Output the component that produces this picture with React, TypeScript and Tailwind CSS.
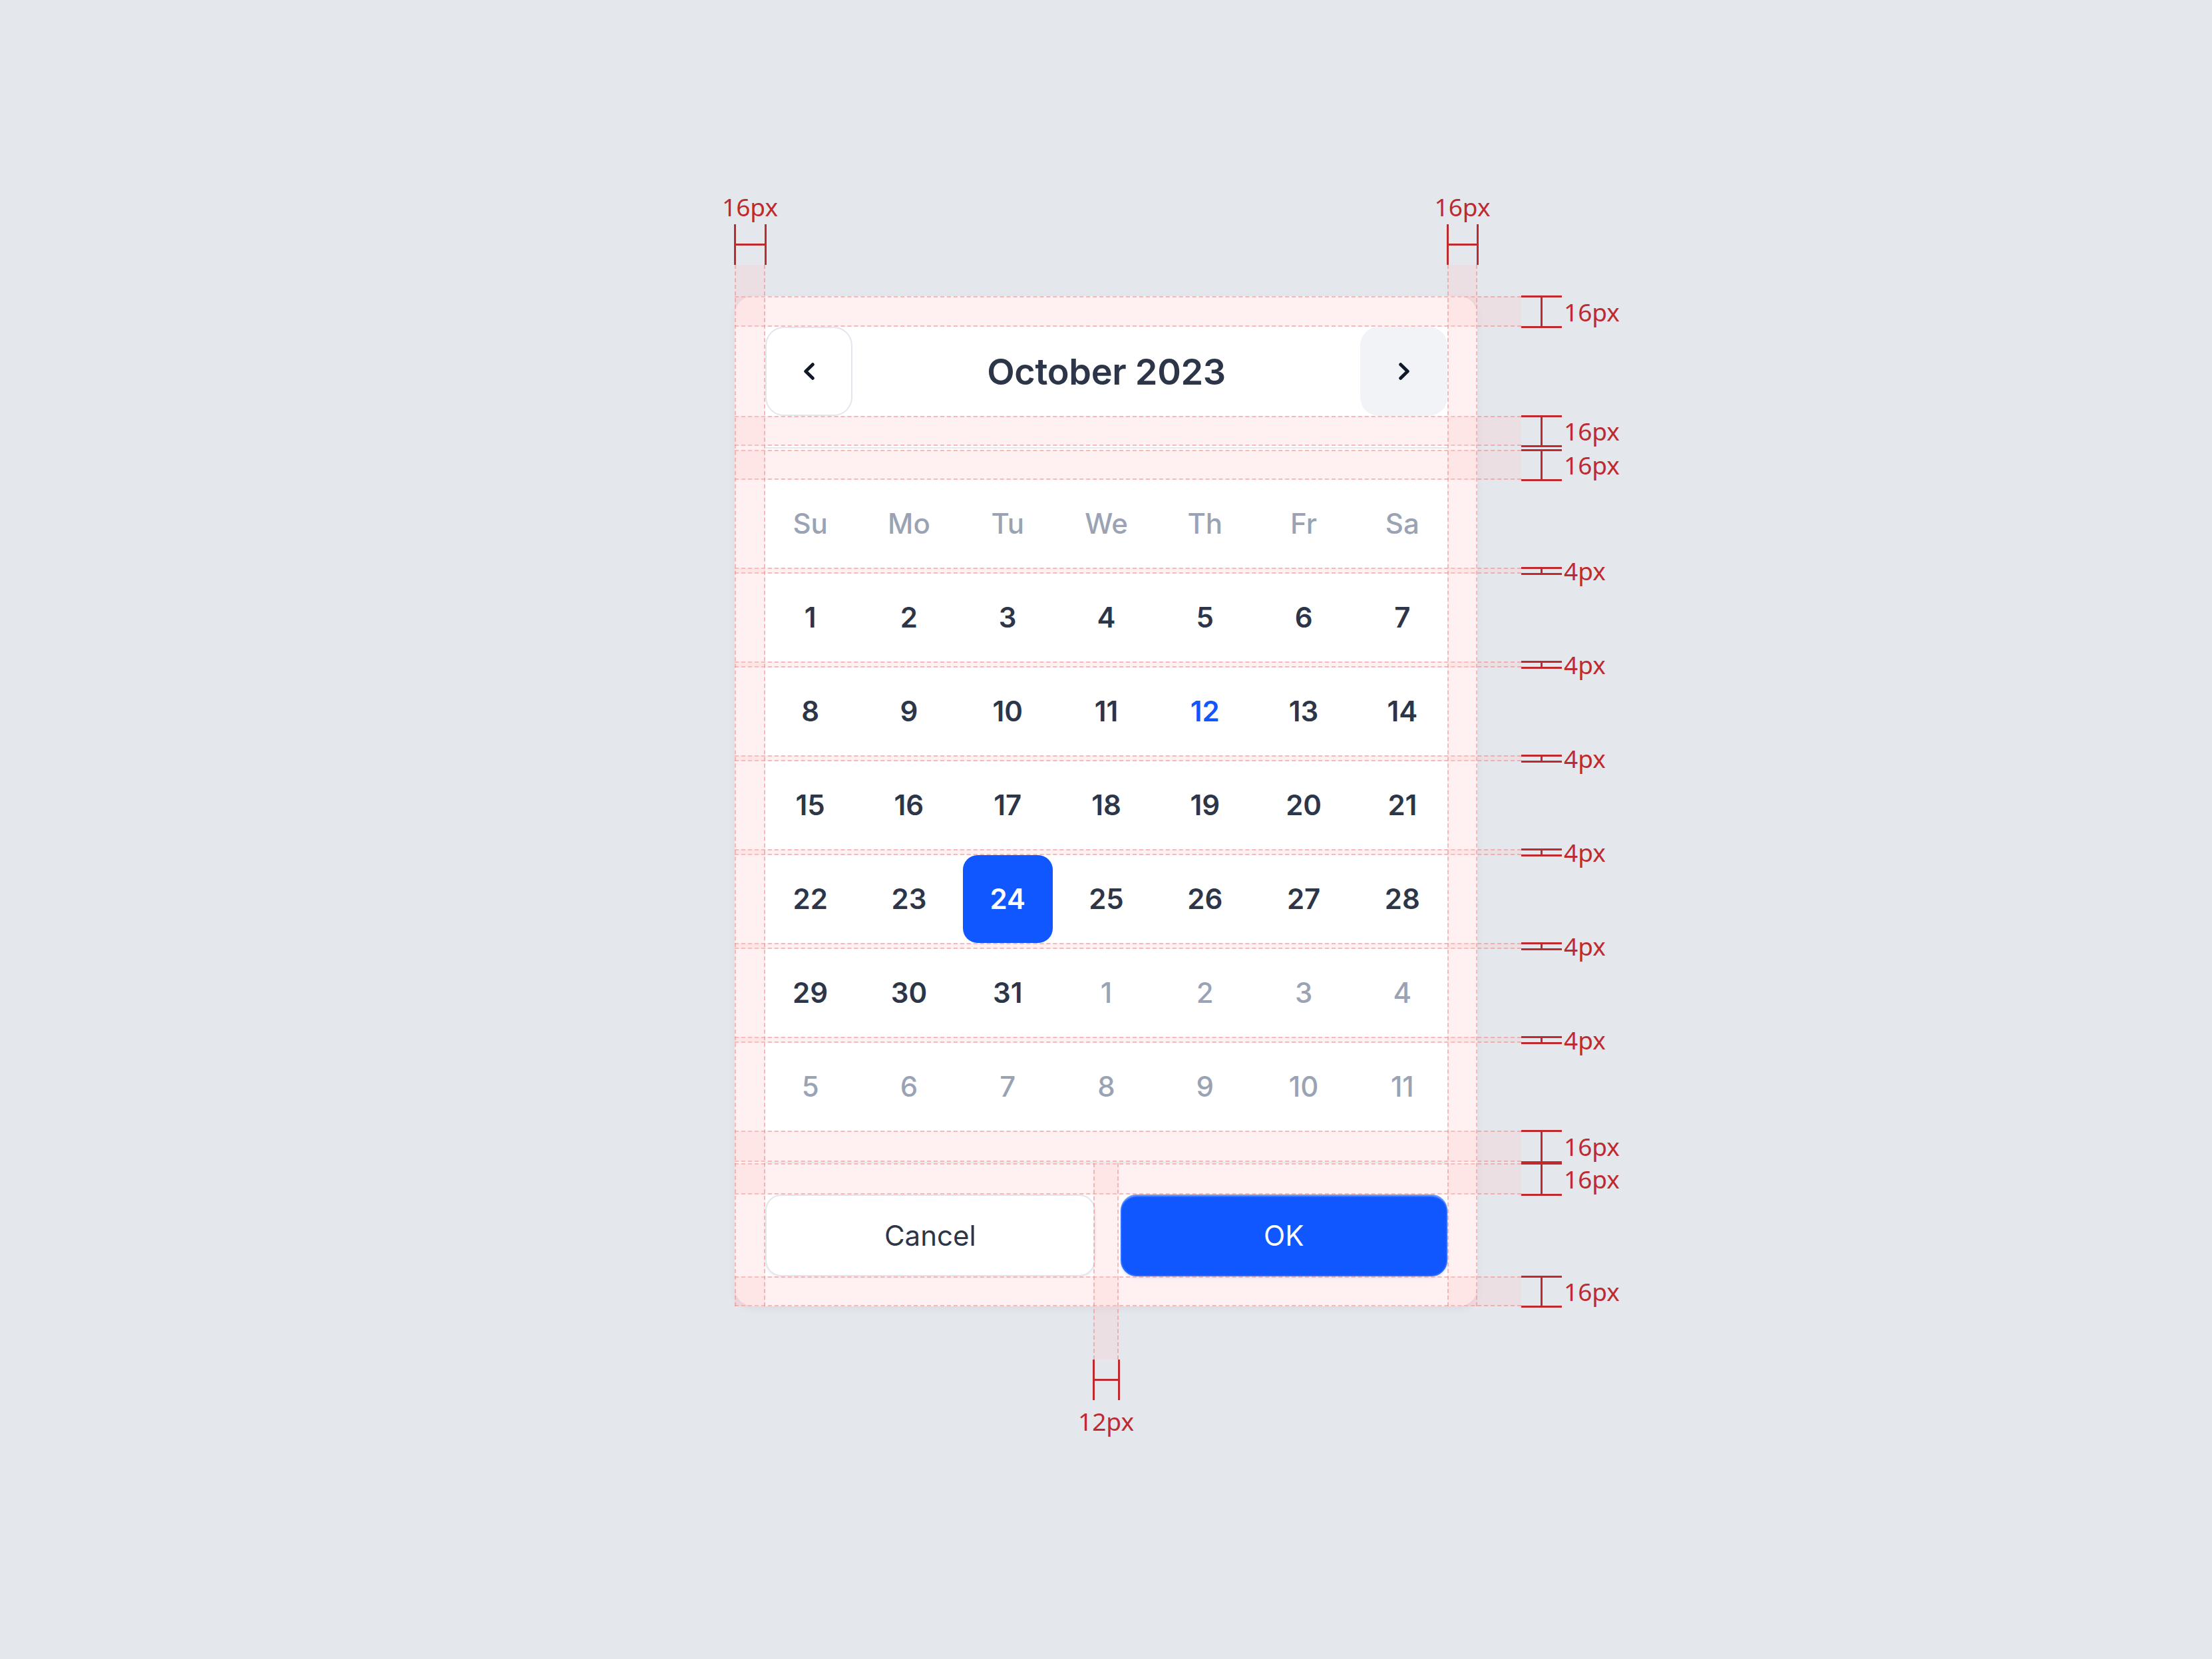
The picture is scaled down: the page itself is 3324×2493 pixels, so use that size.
import type { ReactNode } from "react";

type Day = { n: number; muted?: boolean };

const weekdays = ["Su", "Mo", "Tu", "We", "Th", "Fr", "Sa"];

const weeks: Day[][] = [
  [1, 2, 3, 4, 5, 6, 7].map((n) => ({ n })),
  [8, 9, 10, 11, 12, 13, 14].map((n) => ({ n })),
  [15, 16, 17, 18, 19, 20, 21].map((n) => ({ n })),
  [22, 23, 24, 25, 26, 27, 28].map((n) => ({ n })),
  [{ n: 29 }, { n: 30 }, { n: 31 }, { n: 1, muted: true }, { n: 2, muted: true }, { n: 3, muted: true }, { n: 4, muted: true }],
  [5, 6, 7, 8, 9, 10, 11].map((n) => ({ n, muted: true })),
];

const TODAY = 12;
const SELECTED = 24;

// layout numbers shared by the spec overlay
const CARD_W = 1116;
const CARD_H = 1518;
const GRID_TOP = 276;
const ROW_H = 132;
const ROW_GAP = 9;
const GUIDE_RIGHT = 1182;

function Chevron({ flip }: { flip?: boolean }) {
  return (
    <svg width="16" height="26" viewBox="0 0 16 26" className={flip ? "rotate-180" : ""}>
      <polyline
        points="13.25,2.75 2.75,13 13.25,23.25"
        fill="none"
        stroke="#111827"
        strokeWidth="5"
        strokeLinecap="round"
        strokeLinejoin="round"
      />
    </svg>
  );
}

function Cell({ children }: { children: ReactNode }) {
  return <div className="flex h-[132px] items-center justify-center">{children}</div>;
}

function DayCell({ d }: { d: Day }) {
  if (!d.muted && d.n === SELECTED) {
    return (
      <Cell>
        <div className="flex h-full w-full items-center justify-center rounded-[22px] bg-[#1157ff] font-semibold text-white">
          {d.n}
        </div>
      </Cell>
    );
  }
  const color = d.muted ? "font-medium text-[#9aa3b4]" : d.n === TODAY ? "font-semibold text-[#1157ff]" : "font-semibold text-[#2d3648]";
  return (
    <Cell>
      <span className={color}>{d.n}</span>
    </Cell>
  );
}

function Calendar() {
  return (
    <div className="flex h-[1518px] w-[1116px] flex-col rounded-[28px] bg-white pb-[45px] pl-[46px] pr-[45px] pt-[46px] shadow-[0_4px_12px_rgba(15,23,42,0.05)]">
      {/* month header */}
      <div className="flex h-[134px] items-stretch justify-between">
        <button className="flex w-[131px] items-center justify-center rounded-[28px] border-2 border-[#e3e6ec] bg-white">
          <Chevron />
        </button>
        <h2 className="flex items-center text-[54px] font-semibold tracking-[-0.3px] text-[#2d3648]">October 2023</h2>
        <button className="flex w-[131px] items-center justify-center rounded-[28px] bg-[#f2f3f7]">
          <Chevron flip />
        </button>
      </div>

      <div className="my-[47px] h-[2px] bg-[#e6e8ec]" />

      {/* weekday labels + days */}
      <div className="grid grid-cols-7 gap-x-[13px] gap-y-[9px] text-[42px] leading-none">
        {weekdays.map((w) => (
          <Cell key={w}>
            <span className="font-medium text-[#9aa3b4]">{w}</span>
          </Cell>
        ))}
        {weeks.flat().map((d, i) => (
          <DayCell key={i} d={d} />
        ))}
      </div>

      <div className="my-[47px] h-[2px] bg-[#e6e8ec]" />

      {/* actions */}
      <div className="flex h-[123px] gap-[38px] text-[42px]">
        <button className="flex-1 rounded-[24px] border-2 border-[#e3e6ec] bg-white text-[#2d3648] shadow-[0_2px_4px_rgba(15,23,42,0.06)]">
          Cancel
        </button>
        <button className="flex-1 rounded-[24px] bg-[#1157ff] text-white shadow-[inset_0_4px_2px_-1px_rgba(255,255,255,0.3),inset_0_0_0_2px_rgba(255,255,255,0.12),0_2px_4px_rgba(17,87,255,0.2)]">
          OK
        </button>
      </div>
    </div>
  );
}

type Band = { x: number; y: number; w: number; h: number; vertical?: boolean };

function GuideBand({ b }: { b: Band }) {
  return (
    <div
      className={`absolute border-dashed border-[rgba(235,130,130,0.5)] bg-[rgba(255,200,200,0.25)] ${b.vertical ? "border-x-2" : "border-y-2"}`}
      style={{ left: b.x, top: b.y, width: b.w, height: b.h }}
    />
  );
}

function VMark({ y, h, label }: { y: number; h: number; label: string }) {
  return (
    <div className="absolute flex items-center" style={{ left: GUIDE_RIGHT, top: y, height: h }}>
      <div className="relative h-full w-[61px]">
        <div className="absolute left-0 top-[-1px] h-[3px] w-full bg-[#bf2a2f]" />
        <div className="absolute bottom-[-2px] left-0 h-[3px] w-full bg-[#bf2a2f]" />
        <div className="absolute inset-y-0 left-[29px] w-[3px] bg-[#bf2a2f]" />
      </div>
      <span className="ml-[3px] whitespace-nowrap text-[37px] leading-none text-[#bf2a2f]">{label}</span>
    </div>
  );
}

function HMark({ x, w, y, label, below }: { x: number; w: number; y: number; label: string; below?: boolean }) {
  return (
    <div className="absolute h-[61px]" style={{ left: x, top: y, width: w }}>
      <div className="absolute inset-y-0 left-[-1px] w-[3px] bg-[#bf2a2f]" />
      <div className="absolute inset-y-0 right-[-2px] w-[3px] bg-[#bf2a2f]" />
      <div className="absolute inset-x-0 top-[29px] h-[3px] bg-[#bf2a2f]" />
      <span
        className={`absolute left-1/2 -translate-x-1/2 whitespace-nowrap text-[37px] leading-none text-[#bf2a2f] ${below ? "top-full mt-[13px]" : "bottom-full mb-[8px]"}`}
      >
        {label}
      </span>
    </div>
  );
}

function SpecOverlay() {
  const rowGaps = Array.from({ length: 6 }, (_, i) => GRID_TOP + ROW_H * (i + 1) + ROW_GAP * i);
  const gridBottom = GRID_TOP + ROW_H * 7 + ROW_GAP * 6;

  const spacing = [
    { y: 0, h: 46 },
    { y: 180, h: 45 },
    { y: 231, h: 45 },
    { y: gridBottom, h: 47 },
    { y: gridBottom + 49, h: 47 },
    { y: CARD_H - 45, h: 45 },
  ];

  const bands: Band[] = [
    ...spacing.map((s) => ({ x: 0, y: s.y, w: GUIDE_RIGHT, h: s.h })),
    ...rowGaps.map((y) => ({ x: 0, y, w: GUIDE_RIGHT, h: ROW_GAP })),
    { x: 0, y: -47, w: 46, h: CARD_H + 47, vertical: true },
    { x: CARD_W - 45, y: -47, w: 45, h: CARD_H + 47, vertical: true },
    { x: 539, y: gridBottom + 49, w: 38, h: 295, vertical: true },
  ];

  return (
    <div className="pointer-events-none absolute inset-0 font-['Noto_Sans',sans-serif]">
      {bands.map((b, i) => (
        <GuideBand key={i} b={b} />
      ))}
      {spacing.map((s, i) => (
        <VMark key={`s${i}`} y={s.y} h={s.h} label="16px" />
      ))}
      {rowGaps.map((y) => (
        <VMark key={`r${y}`} y={y} h={ROW_GAP} label="4px" />
      ))}
      <HMark x={0} w={46} y={-108} label="16px" />
      <HMark x={CARD_W - 45} w={45} y={-108} label="16px" />
      <HMark x={539} w={38} y={1598} label="12px" below />
    </div>
  );
}

export default function App() {
  return (
    <div className="min-h-screen bg-[#e4e7ec] pt-[445px] font-['Inter',sans-serif]">
      <div className="relative mx-auto w-[1116px]">
        <Calendar />
        <SpecOverlay />
      </div>
    </div>
  );
}
